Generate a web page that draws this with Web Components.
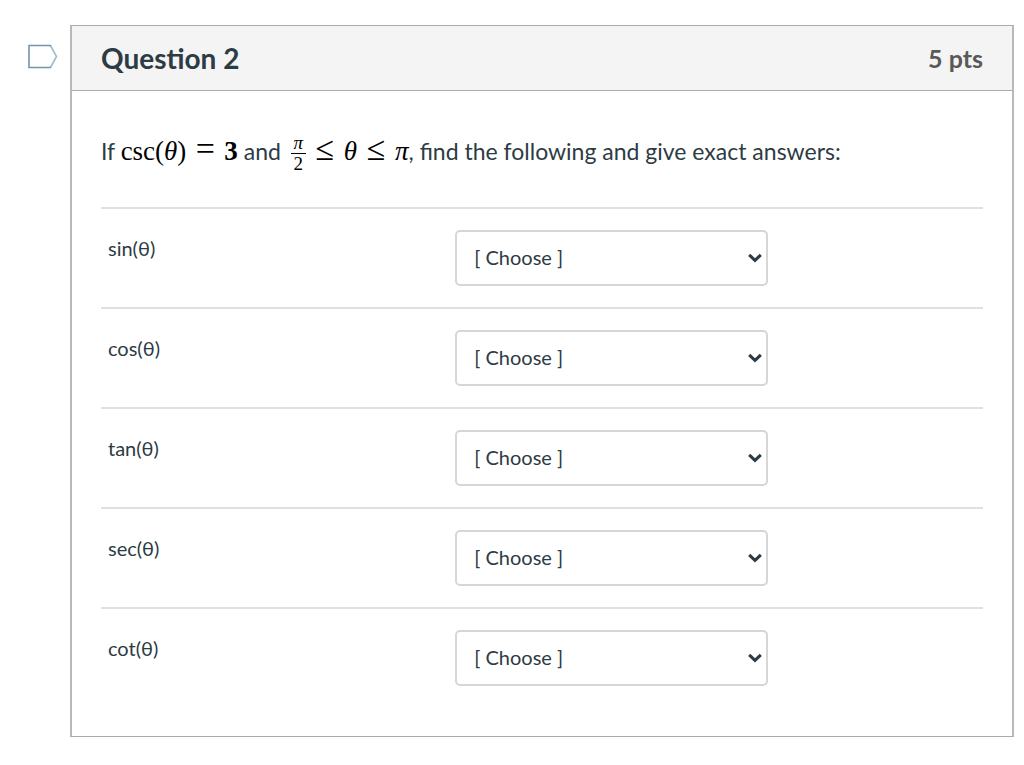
<!DOCTYPE html>
<html lang="en">
<head>
<meta charset="utf-8">
<meta name="viewport" content="width=device-width, initial-scale=1">
<title>Question 2</title>
<style>
  body {
    margin: 0;
    padding: 25px 10px 28px 28px;
    background: #fff;
    color: #2d3b45;
    font-family: Lato, "Noto Sans", sans-serif;
    font-size: 23px;
  }
</style>
</head>
<body>
<quiz-question name="Question 2" points="5 pts">
  <span slot="text">If <math-text>csc(<i>θ</i>)<math-op>=</math-op><b>3</b></math-text> and <math-text><math-frac><i slot="top">π</i><span slot="bottom">2</span></math-frac><math-op>≤</math-op><i>θ</i><math-op>≤</math-op><i>π</i></math-text>, find the following and give exact answers:</span>
  <answer-match label="sin(θ)"></answer-match>
  <answer-match label="cos(θ)"></answer-match>
  <answer-match label="tan(θ)"></answer-match>
  <answer-match label="sec(θ)"></answer-match>
  <answer-match label="cot(θ)"></answer-match>
</quiz-question>

<script>
class QuizQuestion extends HTMLElement {
  constructor() {
    super()
    this.attachShadow({ mode: 'open' })
  }

  connectedCallback() {
    this.shadowRoot.innerHTML = `
      <style>
        :host {
          display: flex;
          align-items: flex-start;
          gap: 12px;
        }

        .flag {
          flex: none;
          margin-top: 19px;
          padding: 0;
          border: 0;
          background: none;
          line-height: 0;
          cursor: pointer;
        }

        .card {
          flex: 1;
          min-width: 0;
          border: 1px solid #aaa;
          border-width: 1px 2px;
          border-left-color: #b8b8b8;
          border-right-color: #b8b8b8;
        }

        header {
          display: flex;
          align-items: center;
          justify-content: space-between;
          padding: 0 29px;
          border-bottom: 1px solid #aaa;
          background: #f4f4f4;
          line-height: 64px;
        }

        h2 {
          margin: 0;
          font-size: 28px;
        }

        .points {
          color: #595959;
          font-size: 25px;
          font-weight: 700;
        }

        .body {
          padding: 32px 29px 29px;
        }

        .text {
          margin: 0 0 28px;
          line-height: 56px;
        }
      </style>
      <button class="flag" type="button" aria-label="Flag question">
        <svg width="30" height="26" viewBox="0 0 30 26" fill="none" stroke-width="1.6">
          <path d="M22.5 1.5L28.5 12.5L22.5 23.5" stroke="#a3bacb"/>
          <path d="M23 1.5H1V23.5H23" stroke="#7593a9"/>
        </svg>
      </button>
      <section class="card">
        <header>
          <h2>${this.getAttribute('name')}</h2>
          <span class="points">${this.getAttribute('points')}</span>
        </header>
        <div class="body">
          <p class="text"><slot name="text"></slot></p>
          <slot></slot>
        </div>
      </section>
    `
  }
}

class AnswerMatch extends HTMLElement {
  constructor() {
    super()
    this.attachShadow({ mode: 'open' })
  }

  connectedCallback() {
    this.shadowRoot.innerHTML = `
      <style>
        :host {
          display: grid;
          grid-template-columns: 2fr 3fr;
          align-items: start;
          padding: 21px 7px;
          border-top: 2px solid #e0e0e0;
        }

        label {
          font-size: 20px;
          line-height: 36px;
        }

        .field {
          display: grid;
          width: 60%;
          min-width: 200px;
          align-items: center;
        }

        select, svg {
          grid-area: 1 / 1;
        }

        select {
          box-sizing: border-box;
          width: 100%;
          height: 56px;
          padding: 0 32px 2px 17px;
          appearance: none;
          border: 2px solid #d4d6d7;
          border-radius: 5px;
          background: #fff;
          color: inherit;
          font: inherit;
          font-size: 20px;
        }

        svg {
          justify-self: end;
          margin-right: 6px;
          pointer-events: none;
        }
      </style>
      <label for="answer">${this.getAttribute('label')}</label>
      <div class="field">
        <select id="answer">
          <option>[ Choose ]</option>
        </select>
        <svg width="14" height="10" viewBox="0 0 14 10" fill="none" stroke="#2d3b45" stroke-width="3">
          <path d="M1.2 1.8L7 7.4L12.8 1.8"/>
        </svg>
      </div>
    `
  }
}

class MathText extends HTMLElement {
  constructor() {
    super()
    this.attachShadow({ mode: 'open' }).innerHTML = `
      <style>
        :host {
          color: #000;
          font-family: "Liberation Serif", serif;
          font-size: 27px;
          line-height: 1;
          white-space: nowrap;
        }
      </style><slot></slot>`
  }
}

class MathOp extends HTMLElement {
  constructor() {
    super()
    this.attachShadow({ mode: 'open' }).innerHTML = `
      <style>
        :host {
          display: inline-block;
          width: 38px;
          font-size: 34px;
          text-align: center;
        }
      </style><slot></slot>`
  }
}

class MathFrac extends HTMLElement {
  constructor() {
    super()
    this.attachShadow({ mode: 'open' }).innerHTML = `
      <style>
        :host {
          display: inline-flex;
          flex-direction: column;
          align-items: center;
          width: 15px;
          margin-left: 4px;
          font-size: 19px;
          line-height: 20px;
          vertical-align: middle;
        }

        .bar {
          width: 100%;
          height: 1px;
          background: #000;
        }
      </style>
      <slot name="top"></slot>
      <span class="bar"></span>
      <slot name="bottom"></slot>
    `
  }
}

customElements.define('math-op', MathOp)
customElements.define('math-frac', MathFrac)
customElements.define('math-text', MathText)
customElements.define('answer-match', AnswerMatch)
customElements.define('quiz-question', QuizQuestion)
</script>
</body>
</html>
